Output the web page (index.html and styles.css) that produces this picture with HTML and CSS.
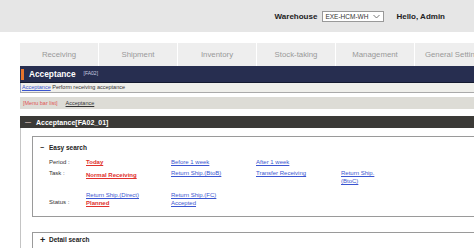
FILE: index.html
```html
<!DOCTYPE html>
<html lang="en">
  <head>
    <meta charset="UTF-8" />
    <title>Acceptance</title>
    <link rel="stylesheet" href="styles.css">
  </head>
  <body>
    <div class="topbar">
      <span class="wh-label">Warehouse</span>
      <span class="wh-select">
        EXE-HCM-WH
        <svg width="7" height="5" viewBox="0 0 7 5"><path d="M0.5 1 L3.5 4 L6.5 1" fill="none" stroke="#555" stroke-width="0.8"/></svg>
      </span>
      <span class="hello">Hello, Admin</span>
    </div>

    <div class="page">
      <div class="tabs">
        <a class="tab">Receiving</a>
        <a class="tab">Shipment</a>
        <a class="tab">Inventory</a>
        <a class="tab">Stock-taking</a>
        <a class="tab">Management</a>
        <a class="tab">General Settings</a>
      </div>

      <div class="titlebar">
        <span class="title-mark"></span>
        <span class="title">Acceptance</span>
        <span class="title-code">[FA02]</span>
      </div>
      <div class="info">
        <a href="#" class="link">Acceptance</a> Perform receiving acceptance
      </div>
      <div class="menubar">
        <span class="menu-list">[Menu bar list]</span>
        <a href="#" class="crumb">Acceptance</a>
      </div>

      <div class="panel-head">
        <span class="dash">&mdash;</span>
        <span>Acceptance[FA02_01]</span>
      </div>
      <div class="panel">
        <div class="box easy">
          <div class="box-head"><span class="sign">&minus;</span>Easy search</div>
          <div class="search-grid">
            <span class="label">Period :</span>
            <a href="#" class="red">Today</a>
            <a href="#" class="link">Before 1 week</a>
            <a href="#" class="link">After 1 week</a>
            <span></span>

            <span class="label">Task :</span>
            <a href="#" class="red low">Normal Receiving</a>
            <a href="#" class="link">Return Ship.(BtoB)</a>
            <a href="#" class="link">Transfer Receiving</a>
            <a href="#" class="link">Return Ship.(BtoC)</a>

            <span class="label bottom">Status :</span>
            <div class="pair">
              <a href="#" class="link">Return Ship.(Direct)</a>
              <a href="#" class="red">Planned</a>
            </div>
            <div class="pair">
              <a href="#" class="link">Return Ship.(FC)</a>
              <a href="#" class="link">Accepted</a>
            </div>
          </div>
        </div>
        <div class="box detail">
          <div class="box-head"><span class="sign plus">+</span>Detail search</div>
        </div>
      </div>
    </div>
  </body>
</html>
```

FILE: styles.css
```css
* {
  margin: 0;
  padding: 0;
  box-sizing: border-box;
}

body {
  font-family: "Liberation Sans", Arial, sans-serif;
  color: #222;
  background: #ffffff;
  width: 474px;
  height: 248px;
  overflow: hidden;
}

a {
  cursor: pointer;
}

.topbar {
  height: 32px;
  background: #e6e6e6;
  display: flex;
  align-items: center;
  justify-content: flex-end;
  padding-right: 29px;
  font-size: 8px;
  font-weight: 700;
}

.wh-select {
  margin-left: 5px;
  width: 62px;
  height: 11px;
  background: #fff;
  border: 1px solid #999;
  font-weight: 400;
  font-size: 6.5px;
  color: #333;
  display: flex;
  align-items: center;
  justify-content: space-between;
  padding: 0 3px 0 2px;
}

.hello {
  margin-left: 12px;
}

.page {
  width: 560px;
  padding: 11px 0 0 20px;
}

.tabs {
  display: flex;
  gap: 1px;
}

.tab {
  width: 78px;
  height: 23px;
  line-height: 23px;
  background: #eeeeee;
  color: #999;
  font-size: 7.8px;
  text-align: center;
  white-space: nowrap;
}

.titlebar {
  height: 17px;
  background: #272e50;
  border-bottom: 1px solid #141a30;
  display: flex;
  align-items: center;
  padding-left: 1px;
}

.title-mark {
  width: 3px;
  height: 11px;
  background: #e8742c;
  margin-right: 5px;
}

.title {
  color: #fff;
  font-weight: 700;
  font-size: 8.3px;
}

.title-code {
  color: #c8cde0;
  font-size: 5px;
  margin-left: 8px;
  align-self: flex-start;
  margin-top: 4px;
}

.info {
  height: 10px;
  line-height: 9px;
  background: #efefeb;
  border-left: 1px solid #8da0c8;
  border-bottom: 1px solid #aaa;
  font-size: 5.5px;
  color: #333;
  padding-left: 1px;
}

.link {
  color: #3a55d0;
  text-decoration: underline;
}

.menubar {
  margin-top: 4px;
  height: 12px;
  background: #dddcd6;
  display: flex;
  align-items: center;
  padding-left: 3px;
  gap: 8px;
  font-size: 5.5px;
}

.menu-list {
  color: #e05454;
}

.crumb {
  color: #333;
  text-decoration: underline;
}

.panel-head {
  margin-top: 7px;
  height: 12px;
  background: #3b3a37;
  color: #fff;
  font-weight: 700;
  font-size: 7px;
  display: flex;
  align-items: center;
  padding-left: 5px;
}

.dash {
  color: #ecd6cc;
  font-size: 6px;
  margin-right: 5px;
}

.panel {
  border-left: 1px solid #c4c4c4;
  padding: 8px 0 40px 11px;
}

.box {
  border: 1px solid #9a9a9a;
}

.easy {
  height: 81px;
  padding: 7px 0 0 7px;
}

.detail {
  margin-top: 15px;
  padding: 3px 0 0 7px;
  height: 30px;
}

.box-head {
  font-size: 6.5px;
  font-weight: 700;
  line-height: 8px;
  display: flex;
  align-items: center;
}

.sign {
  width: 9px;
  font-size: 7px;
}

.plus {
  font-size: 9px;
}

.search-grid {
  display: grid;
  grid-template-columns: 37px 85px 85px 85px 45px;
  row-gap: 3px;
  margin: 6px 0 0 9px;
  font-size: 6px;
  line-height: 8px;
}

.search-grid > :nth-child(10) {
  margin-bottom: 3px;
}

.label {
  color: #333;
}

.bottom {
  align-self: end;
  padding-bottom: 1px;
}

.red {
  color: #e0302c;
  font-weight: 700;
  text-decoration: underline;
}

.low {
  padding-top: 2px;
}

.pair {
  display: flex;
  flex-direction: column;
}
```
